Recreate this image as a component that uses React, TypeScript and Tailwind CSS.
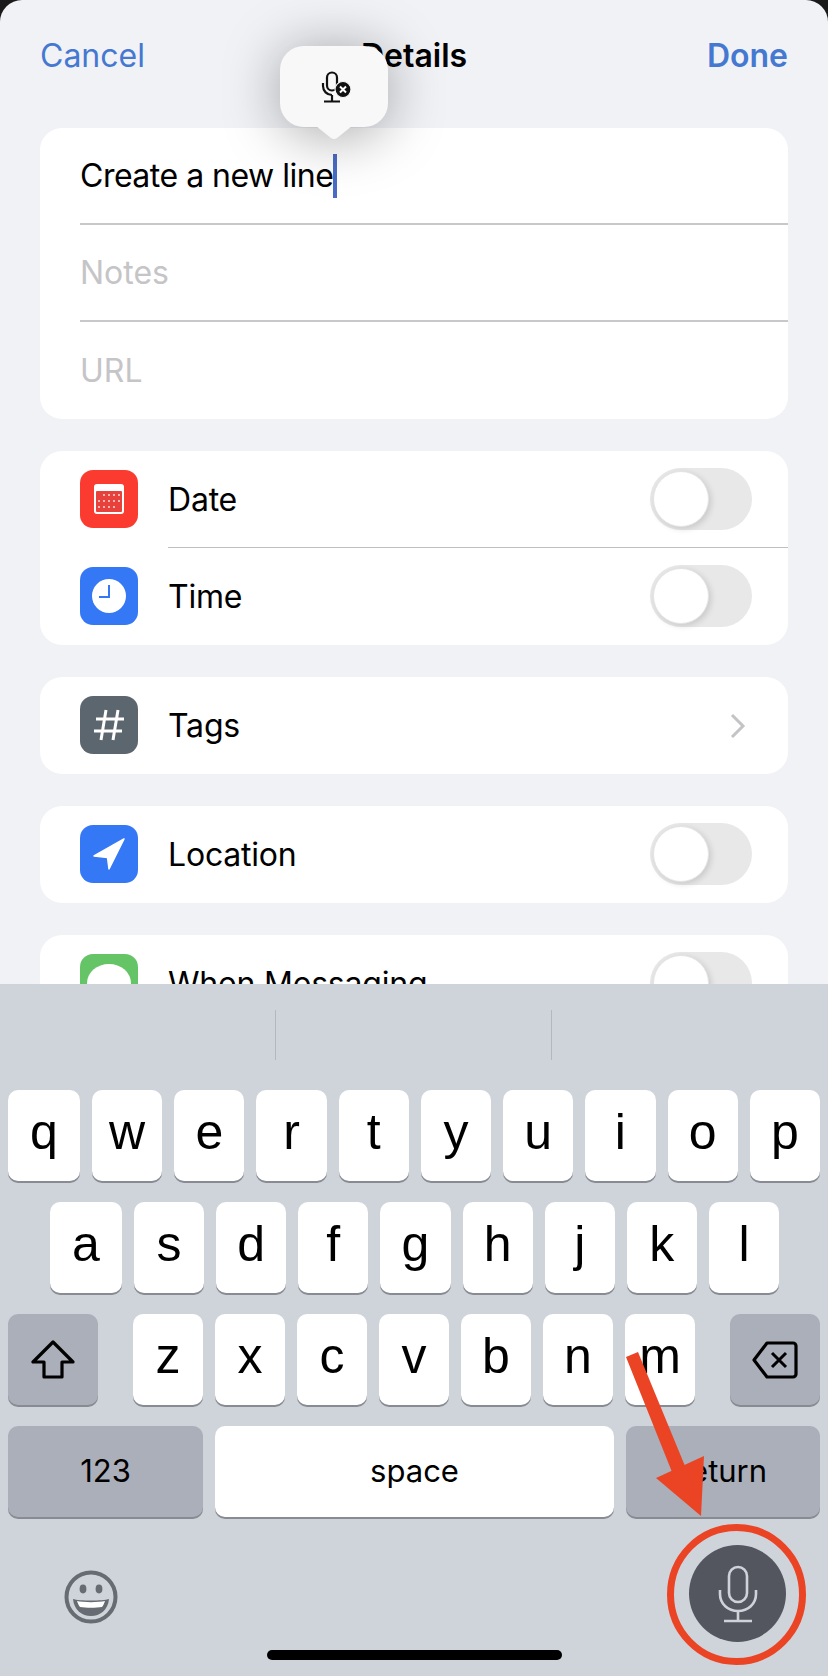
const FONT = "font-['Inter','Liberation_Sans',sans-serif]";

function Toggle() {
  return (
    <div className="-mt-px h-[62px] w-[102px] rounded-full bg-[#e8e8e9] p-[3px]">
      <div className="h-[56px] w-[56px] rounded-full border border-[#e4e4e4] bg-white shadow-[2px_2px_6px_rgba(0,0,0,0.14)]" />
    </div>
  );
}

function Tile({ color, children }: { color: string; children: React.ReactNode }) {
  return (
    <div className={`-mt-px flex h-[58px] w-[58px] shrink-0 items-center justify-center rounded-[13px] ${color}`}>
      {children}
    </div>
  );
}

function CalendarIcon() {
  return (
    <svg width="34" height="34" viewBox="0 0 34 34">
      <rect x="2" y="2" width="30" height="30" rx="3" fill="#fff" />
      <rect x="4" y="9" width="26" height="21" rx="1" fill="#e8403a" />
      {[13, 19, 25].map((y) =>
        [7, 12, 17, 22, 27].map((x) =>
          (y === 13 && x < 12) || (y === 25 && x > 22) ? null : (
            <rect key={`${x}-${y}`} x={x - 1} y={y - 1} width="2" height="2" fill="#f7b6b2" />
          )
        )
      )}
    </svg>
  );
}

function ClockIcon() {
  return (
    <svg width="36" height="36" viewBox="0 0 36 36">
      <circle cx="18" cy="18" r="17" fill="#fff" />
      <path d="M18 7v12H8" fill="none" stroke="#3478f6" strokeWidth="2" />
    </svg>
  );
}

function HashIcon() {
  return (
    <svg width="32" height="34" viewBox="0 0 32 34">
      <path d="M13 2 8 32M25 2l-5 30M3 11h28M1 23h28" fill="none" stroke="#fff" strokeWidth="3" />
    </svg>
  );
}

function LocationIcon() {
  return (
    <svg width="34" height="34" viewBox="0 0 34 34">
      <path d="M32 2 2 19l13.500 1.500L17 32z" fill="#fff" stroke="#fff" strokeWidth="1.500" strokeLinejoin="round" />
    </svg>
  );
}

function Row({ icon, label, right }: { icon: React.ReactNode; label: string; right: React.ReactNode }) {
  return (
    <div className="flex h-[97px] items-center pl-10 pr-9">
      {icon}
      <div className="ml-[30px] flex-1 text-[32px] tracking-[-0.2px] text-black">{label}</div>
      {right}
    </div>
  );
}

function LetterRow({ keys, wideFirst }: { keys: string; wideFirst?: boolean }) {
  return (
    <>
      {keys.split("").map((k, i) => (
        <div
          key={k}
          className={`flex h-[91px] items-start justify-center rounded-[10px] bg-white pt-[13px] font-['Liberation_Sans',sans-serif] text-[50px] leading-[58px] text-black shadow-[0_2px_0_#888b92] ${
            wideFirst && i === 0 ? "w-[72px] shrink-0" : "flex-1"
          }`}
        >
          {k}
        </div>
      ))}
    </>
  );
}

function ShiftIcon() {
  return (
    <svg width="44" height="40" viewBox="0 0 44 40">
      <path
        d="M22 2 2 22h11v15h18V22h11z"
        fill="none"
        stroke="#000"
        strokeWidth="3.2"
        strokeLinejoin="round"
      />
    </svg>
  );
}

function DeleteIcon() {
  return (
    <svg width="46" height="38" viewBox="0 0 46 38">
      <path
        d="M15 2h26a3 3 0 0 1 3 3v28a3 3 0 0 1-3 3H15L2 19z"
        fill="none"
        stroke="#000"
        strokeWidth="3.2"
        strokeLinejoin="round"
      />
      <path d="m20 12 14 14M34 12 20 26" fill="none" stroke="#000" strokeWidth="3" />
    </svg>
  );
}

function EmojiIcon() {
  return (
    <svg width="54" height="54" viewBox="0 0 54 54">
      <circle cx="27" cy="27" r="24.500" fill="none" stroke="#676b72" strokeWidth="4" />
      <ellipse cx="19" cy="19" rx="3.400" ry="4.400" fill="#676b72" />
      <ellipse cx="35" cy="19" rx="3.400" ry="4.400" fill="#676b72" />
      <path d="M9 29c6 2 30 2 36 0-1 11-9 17-18 17S10 40 9 29z" fill="#676b72" />
      <path d="M13 31c6 1.500 22 1.500 28 0-1 3-2 5-3 6-6 1-16 1-22 0-1-1-2-3-3-6z" fill="#fff" />
    </svg>
  );
}

function BigMicIcon() {
  return (
    <svg width="40" height="58" viewBox="0 0 40 58" fill="none" stroke="#cfd2d9" strokeWidth="2.600">
      <rect x="11" y="2" width="18" height="35" rx="9" />
      <path d="M2 25v4c0 10 8 17 18 17s18-7 18-17v-4" />
      <path d="M20 46v10M6 56h28" />
    </svg>
  );
}

function TinyMicIcon() {
  return (
    <svg width="32" height="32" viewBox="0 0 32 32" fill="none" stroke="#111" strokeWidth="2.200">
      <rect x="7" y="1.500" width="10" height="18" rx="5" />
      <path d="M3 12v3c0 5 4 9 9 9" />
      <path d="M12 24v6M4 30.500h16" />
      <circle cx="23" cy="18.500" r="8" fill="#111" stroke="#f8f8f9" strokeWidth="1.200" />
      <path d="m20 15.500 6 6m0-6-6 6" stroke="#fff" strokeWidth="2" />
    </svg>
  );
}

export default function App() {
  return (
    <div className={`relative h-[1676px] w-[828px] overflow-hidden bg-[#1a1a1a] ${FONT}`}>
      {/* sheet behind the keyboard */}
      <div className="flex h-[984px] flex-col overflow-hidden rounded-t-[22px] bg-[#f1f2f6]">
        <div className="grid h-[128px] shrink-0 grid-cols-3 items-start px-10 pt-[36px] text-[32px] leading-10">
          <span className="text-[#4579d1]">Cancel</span>
          <span className="text-center font-semibold text-black">Details</span>
          <span className="text-right font-semibold text-[#4579d1]">Done</span>
        </div>

        <div className="mx-10 flex flex-col gap-[32px]">
          <div className="rounded-[22px] bg-white pl-10 text-[32px]">
            <div className="flex h-[97px] items-center border-b-2 border-[#c8c8ca] tracking-[-0.5px] text-black">
              Create a new line
              <span className="h-[44px] w-[4px] bg-[#4a6cc4]" />
            </div>
            <div className="flex h-[97px] items-center border-b-2 border-[#c8c8ca] text-[#c5c5c7]">Notes</div>
            <div className="flex h-[97px] items-center text-[#c5c5c7]">URL</div>
          </div>

          <div className="relative rounded-[22px] bg-white">
            <div className="absolute top-[96px] right-0 left-[128px] h-px bg-[#c0c0c2]" />
            <Row icon={<Tile color="bg-[#fb3a30]"><CalendarIcon /></Tile>} label="Date" right={<Toggle />} />
            <Row icon={<Tile color="bg-[#3478f6]"><ClockIcon /></Tile>} label="Time" right={<Toggle />} />
          </div>

          <div className="rounded-[22px] bg-white">
            <Row
              icon={<Tile color="bg-[#5c666e]"><HashIcon /></Tile>}
              label="Tags"
              right={
                <svg width="16" height="26" viewBox="0 0 16 26" className="mr-1.5">
                  <path d="m2 2 11 11L2 24" fill="none" stroke="#c4c4c6" strokeWidth="3" />
                </svg>
              }
            />
          </div>

          <div className="rounded-[22px] bg-white">
            <Row icon={<Tile color="bg-[#3478f6]"><LocationIcon /></Tile>} label="Location" right={<Toggle />} />
          </div>

          <div className="rounded-[22px] bg-white">
            <Row
              icon={
                <Tile color="bg-[#65c466]">
                  <div className="h-[38px] w-[44px] rounded-[50%] bg-white" />
                </Tile>
              }
              label="When Messaging"
              right={<Toggle />}
            />
          </div>
        </div>
      </div>

      {/* keyboard */}
      <div className="flex h-[692px] flex-col bg-[#cfd3da]">
        <div className="flex h-[106px] shrink-0 items-start pt-[26px]">
          <div className="ml-[275px] h-[50px] w-px bg-[#b4b7be]" />
          <div className="ml-[275px] h-[50px] w-px bg-[#b4b7be]" />
        </div>

        <div className="flex flex-col gap-[21px] px-2">
          <div className="flex gap-3">
            <LetterRow keys="qwertyuiop" wideFirst />
          </div>
          <div className="flex gap-3 pr-[41px] pl-[42px]">
            <LetterRow keys="asdfghjkl" wideFirst />
          </div>
          <div className="flex justify-between">
            <div className="flex h-[91px] w-[90px] items-center justify-center rounded-[10px] bg-[#abafb9] shadow-[0_2px_0_#888b92]">
              <ShiftIcon />
            </div>
            <div className="flex w-[562px] gap-3">
              <LetterRow keys="zxcvbnm" />
            </div>
            <div className="flex h-[91px] w-[90px] items-center justify-center rounded-[10px] bg-[#abafb9] shadow-[0_2px_0_#888b92]">
              <DeleteIcon />
            </div>
          </div>
          <div className="flex gap-3 text-[31px] text-black">
            <div className="flex h-[91px] w-[195px] items-center justify-center rounded-[10px] bg-[#abafb9] shadow-[0_2px_0_#888b92]">
              123
            </div>
            <div className="flex h-[91px] flex-1 items-center justify-center rounded-[10px] bg-white shadow-[0_2px_0_#888b92]">
              space
            </div>
            <div className="flex h-[91px] w-[194px] items-center justify-center rounded-[10px] bg-[#abafb9] shadow-[0_2px_0_#888b92]">
              return
            </div>
          </div>
        </div>

        <div className="flex flex-1 items-start justify-between pt-[28px] pr-[42px] pl-16">
          <div className="mt-[25px]">
            <EmojiIcon />
          </div>
          <div className="flex h-[97px] w-[97px] items-center justify-center rounded-full bg-[#54565f]">
            <BigMicIcon />
          </div>
        </div>
        <div className="mx-auto mb-4 h-[10px] w-[295px] rounded-full bg-black" />
      </div>

      {/* dictation tooltip */}
      <div className="absolute top-[46px] left-[280px] drop-shadow-[0_4px_28px_rgba(0,0,0,0.34)]">
        <div className="flex h-[81px] w-[108px] items-center justify-center rounded-[24px] bg-[#f8f8f9] pl-1">
          <TinyMicIcon />
        </div>
        <svg width="36" height="14" viewBox="0 0 36 14" className="mx-auto -mt-px">
          <path d="M0 0h36L21 12q-3 2-6 0z" fill="#f8f8f9" />
        </svg>
      </div>

      {/* red annotation */}
      <svg width="828" height="1676" viewBox="0 0 828 1676" className="absolute top-0 left-0" fill="none">
        <path d="M626 1357 638 1352 685 1466 672 1472z" fill="#ea4425" />
        <path d="M656 1478 704 1456 701 1516z" fill="#ea4425" />
        <ellipse cx="736.500" cy="1594.500" rx="66" ry="67" stroke="#ea4425" strokeWidth="7" />
      </svg>
    </div>
  );
}
